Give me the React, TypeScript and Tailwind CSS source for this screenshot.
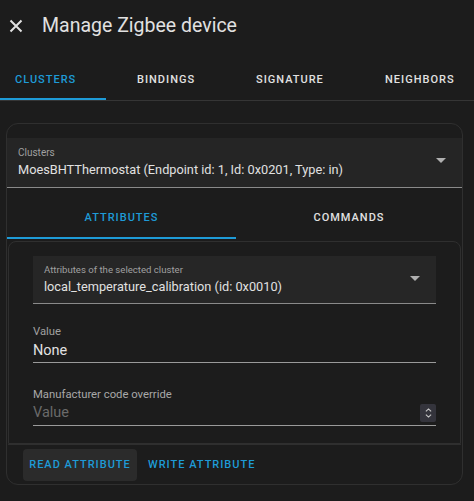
import React from 'react';

function Caret({ className }: { className?: string }) {
  return (
    <svg viewBox="0 0 10 5" className={className} fill="currentColor">
      <path d="M0 0 L10 0 L5 5 Z" />
    </svg>
  );
}

export default function App() {
  const blue = 'text-[#1e9bd7]';
  return (
    <div className="w-[474px] h-[501px] bg-[#1c1c1c] text-[#e1e1e1] overflow-hidden" style={{ fontFamily: 'Roboto, "Noto Sans", sans-serif' }}>
      {/* header */}
      <div className="flex items-center h-[50px] pt-[1px]">
        <div className="w-[32px] flex justify-center">
          <svg viewBox="0 0 24 24" className="w-[22px] h-[22px]" fill="none" stroke="#e1e1e1" strokeWidth="2.2">
            <path d="M6 6 L18 18 M18 6 L6 18" />
          </svg>
        </div>
        <div className="ml-[10px] text-[19.5px] leading-none text-[#e1e1e1]">Manage Zigbee device</div>
      </div>

      {/* tabs */}
      <div className="mt-[6px] border-b border-[#353535] flex h-[45px] pt-[4px] text-[11px] font-medium tracking-[1px] whitespace-nowrap">
        <div className="relative w-[106px] flex items-center pl-[15px]">
          <span className={blue}>CLUSTERS</span>
          <div className="absolute left-0 right-0 bottom-0 h-[2px] bg-[#1e9bd7]" />
        </div>
        <div className="flex items-center pl-[31px] w-[150px] text-[#e1e1e1]">BINDINGS</div>
        <div className="flex items-center w-[129px] text-[#e1e1e1]">SIGNATURE</div>
        <div className="flex items-center text-[#e1e1e1]">NEIGHBORS</div>
      </div>

      {/* card */}
      <div className="mt-[22px] mx-[6px] w-[457px] h-[362px] border border-[#2f2f2f] rounded-[12px] flex flex-col overflow-hidden">
        <div className="h-[14px]" />
        <div className="h-[50px] bg-[#252525] border-b border-[#8a8a8a] flex items-center pl-[11px] pr-[16px]">
          <div className="flex-1 flex flex-col">
            <span className="text-[10px] leading-[12px] text-[#a0a0a0] mt-[1px]">Clusters</span>
            <span className="text-[12.75px] leading-[18px] mt-[2px] text-[#e1e1e1]">MoesBHTThermostat (Endpoint id: 1, Id: 0x0201, Type: in)</span>
          </div>
          <Caret className="w-[10px] h-[5px] text-[#b0b0b0] mb-[4px]" />
        </div>

        {/* inner tabs */}
        <div className="flex h-[51px] pt-[10px] text-[11px] font-medium tracking-[1px]">
          <div className="relative w-[229px] flex items-center justify-center">
            <span className={blue}>ATTRIBUTES</span>
            <div className="absolute left-0 right-0 bottom-0 h-[2px] bg-[#1e9bd7]" />
          </div>
          <div className="flex-1 flex items-center justify-center text-[#e1e1e1]">COMMANDS</div>
        </div>

        {/* inner card */}
        <div className="mt-[2px] mx-[1px] h-[203px] border border-[#2f2f2f] rounded-t-[8px] px-[24px] pt-[14px]">
          <div className="h-[48px] bg-[#262626] border-b border-[#8a8a8a] flex items-center pl-[11px] pr-[16px]">
            <div className="flex-1 flex flex-col">
              <span className="text-[9.6px] leading-[12px] text-[#a0a0a0]">Attributes of the selected cluster</span>
              <span className="text-[12.75px] leading-[18px] mt-[2px] text-[#e1e1e1]">local_temperature_calibration (id: 0x0010)</span>
            </div>
            <Caret className="w-[10px] h-[5px] text-[#b0b0b0] mb-[2px]" />
          </div>

          <div className="mt-[22px] border-b border-[#9a9a9a] h-[37px] flex flex-col">
            <span className="text-[11.3px] leading-[12px] text-[#a0a0a0]">Value</span>
            <span className="text-[14.5px] leading-[20px] mt-[3px] text-[#e1e1e1]">None</span>
          </div>

          <div className="mt-[26px] border-b border-[#9a9a9a] h-[37px] flex flex-col">
            <span className="text-[11.3px] leading-[12px] text-[#a8a8a8]">Manufacturer code override</span>
            <div className="flex items-center mt-[2px]">
              <span className="flex-1 text-[14.5px] leading-[20px] text-[#6a6a6a]">Value</span>
              <div className="w-[16px] h-[18px] bg-[#34343c] rounded-[2px] flex flex-col items-center justify-center gap-[2px] mb-[1px]">
                <svg viewBox="0 0 8 4" className="w-[7px] h-[4px]" fill="none" stroke="#c8c8c8" strokeWidth="1.3"><path d="M1 3.5 L4 0.8 L7 3.5" /></svg>
                <svg viewBox="0 0 8 4" className="w-[7px] h-[4px]" fill="none" stroke="#c8c8c8" strokeWidth="1.3"><path d="M1 0.5 L4 3.2 L7 0.5" /></svg>
              </div>
            </div>
          </div>
        </div>

        <div className="mx-[1px] border-t border-[#2f2f2f] flex items-center pl-[15px] pt-[4px] gap-[11px] text-[11px] font-medium tracking-[1px] whitespace-nowrap">
          <div className="h-[32px] w-[114px] bg-[#2b2b2b] rounded-[4px] flex items-center justify-center">
            <span className={blue}>READ ATTRIBUTE</span>
          </div>
          <span className={blue}>WRITE ATTRIBUTE</span>
        </div>
      </div>
    </div>
  );
}
